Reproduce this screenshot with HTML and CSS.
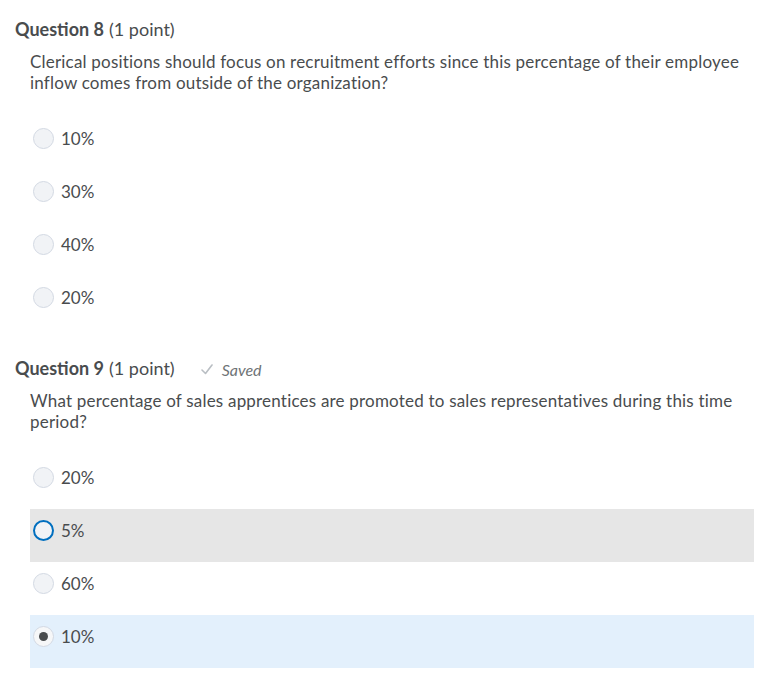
FILE: index.html
```html
<!DOCTYPE html>
<html>
<head>
<meta charset="utf-8">
<link rel="stylesheet" href="styles.css">
</head>
<body>
<div class="page">
  <section class="question q8">
    <h2 class="q-head"><span class="q-title">Question 8</span> <span class="q-points">(1 point)</span></h2>
    <p class="q-text">Clerical positions should focus on recruitment efforts since this percentage of their employee inflow comes from outside of the organization?</p>
    <div class="options">
      <label class="option"><span class="radio"></span><span class="opt-label">10%</span></label>
      <label class="option"><span class="radio"></span><span class="opt-label">30%</span></label>
      <label class="option"><span class="radio"></span><span class="opt-label">40%</span></label>
      <label class="option"><span class="radio"></span><span class="opt-label">20%</span></label>
    </div>
  </section>
  <section class="question q9">
    <h2 class="q-head"><span class="q-title">Question 9</span> <span class="q-points">(1 point)</span>
      <span class="saved"><svg class="check" width="12" height="11" viewBox="0 0 12 11"><path d="M1 6 L4.5 9.5 L11 1" fill="none" stroke="#b9bec3" stroke-width="1.6" stroke-linecap="round" stroke-linejoin="round"/></svg><em>Saved</em></span>
    </h2>
    <p class="q-text">What percentage of sales apprentices are promoted to sales representatives during this time period?</p>
    <div class="options">
      <label class="option"><span class="radio"></span><span class="opt-label">20%</span></label>
      <label class="option hover"><span class="radio focus"></span><span class="opt-label">5%</span></label>
      <label class="option"><span class="radio"></span><span class="opt-label">60%</span></label>
      <label class="option selected"><span class="radio checked"></span><span class="opt-label">10%</span></label>
    </div>
  </section>
</div>
</body>
</html>
```

FILE: styles.css
```css
html, body {
  margin: 0;
  padding: 0;
  background: #ffffff;
}

body {
  font-family: Lato, "Open Sans", sans-serif;
  color: #494c4e;
}

.page {
  padding: 17px 18px 0 15px;
}

.question {
  display: flex;
  flex-direction: column;
}

.q9 {
  margin-top: 27px;
}

.q-head {
  margin: 0;
  font-size: 18px;
  line-height: 24px;
  font-weight: 400;
  display: flex;
  align-items: baseline;
  gap: 5px;
}

.q-title {
  font-weight: 700;
}

.saved {
  display: inline-flex;
  align-items: center;
  gap: 9px;
  margin-left: 21px;
  font-size: 16px;
  color: #6e7376;
}

.saved em {
  font-style: italic;
}

.check {
  display: block;
}

.q-text {
  margin: 10px 0 0 15px;
  font-size: 17px;
  line-height: 21px;
  letter-spacing: 0.2px;
  width: 724px;
}

.q9 .q-text {
  margin-top: 8px;
}

.options {
  margin: 24px 0 0 15px;
  width: 724px;
  display: flex;
  flex-direction: column;
}

.option {
  height: 53px;
  box-sizing: border-box;
  padding: 11px 3px 0;
  display: flex;
  align-items: flex-start;
  gap: 7px;
  font-size: 17px;
  line-height: 21px;
}

.option.hover {
  background: #e6e6e6;
}

.option.selected {
  background: #e3f0fc;
}

.radio {
  width: 21px;
  height: 21px;
  box-sizing: border-box;
  border-radius: 50%;
  border: 1px solid #d3d9e3;
  background: #f1f3f6;
  display: flex;
  align-items: center;
  justify-content: center;
  flex: none;
}

.radio.focus {
  border: 2px solid #006fbf;
  background: #f1f3f6;
}

.radio.checked {
  background: #f6f7f8;
}

.radio.checked::after {
  content: "";
  width: 9px;
  height: 9px;
  border-radius: 50%;
  background: #494c4e;
}

.opt-label {
  display: block;
}
```
